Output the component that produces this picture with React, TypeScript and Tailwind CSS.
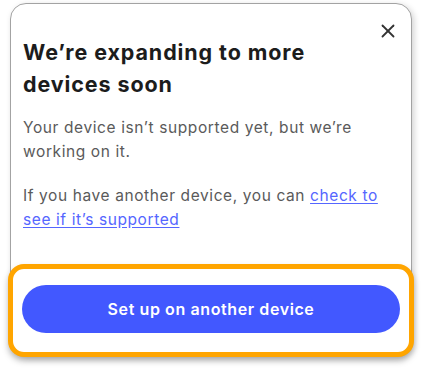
import { X } from 'lucide-react';

export default function App() {
  return (
    <div className="min-h-[371px] w-[422px] bg-white pt-[3px] font-['Inter',sans-serif]">
      <div className="mx-[10px] rounded-[16px] border border-[#a3a3a3] bg-white shadow-[2px_2px_6px_rgba(0,0,0,0.18)]">
        <div className="relative px-[12px] pt-[32px]">
          <button className="absolute right-[12px] top-[16px] text-[#333]">
            <X size={22} strokeWidth={2} />
          </button>
          <h2 className="text-[21.5px] font-bold leading-[32px] tracking-[0.9px] text-[#1c1c1c]">
            We’re expanding to more
            <br />
            devices soon
          </h2>
          <p className="mt-[16px] pr-[30px] text-[15.5px] leading-[24px] tracking-[0.6px] text-[#5a5a5a]">
            Your device isn’t supported yet, but we’re working on it.
          </p>
          <p className="mt-[20px] pr-[10px] text-[15.5px] leading-[24px] tracking-[0.6px] text-[#5a5a5a]">
            If you have another device, you can{' '}
            <a href="#" className="text-[#5566ff] underline underline-offset-2">
              check to see if it’s supported
            </a>
          </p>
        </div>
        <div className="-mx-[3px] -mb-[2px] mt-[32px] rounded-[16px] border-[5px] border-[#ffa500] bg-white px-[9px] pb-[19px] pt-[16px] shadow-[0_4px_6px_rgba(0,0,0,0.25)]">
          <button className="flex h-[48px] w-full items-center justify-center rounded-full bg-[#4258ff] text-[16px] font-semibold tracking-[0.6px] text-white">
            Set up on another device
          </button>
        </div>
      </div>
    </div>
  );
}
